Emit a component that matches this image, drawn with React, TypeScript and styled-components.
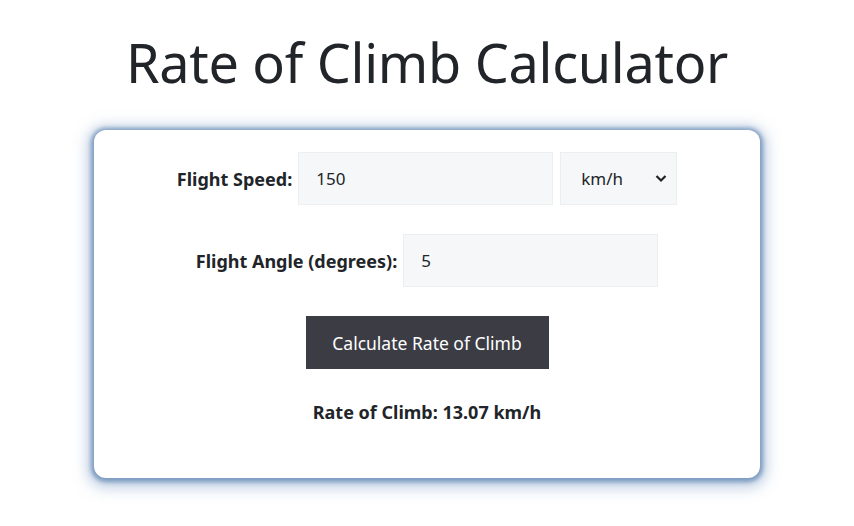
import React, { useState } from 'react';
import styled, { createGlobalStyle } from 'styled-components';

const GlobalStyle = createGlobalStyle`
  body {
    margin: 0;
    background: #ffffff;
    font-family: "Noto Sans", "Open Sans", sans-serif;
    color: #212529;
  }
`;

const Page = styled.div`
  display: flex;
  flex-direction: column;
  align-items: center;
  padding-top: 22px;
  min-height: 100vh;
  box-sizing: border-box;
`;

const Title = styled.h1`
  margin: 0 0 28px;
  font-size: 54px;
  font-weight: 400;
  line-height: 80px;
  letter-spacing: -0.3px;
`;

const Card = styled.div`
  width: 666px;
  box-sizing: border-box;
  background: #fff;
  border-radius: 12px;
  box-shadow: 0 1px 4px 3px rgba(110, 145, 185, 0.85), 0 3px 14px 7px rgba(135, 165, 203, 0.5);
  padding: 22px 0 54px;
  display: flex;
  flex-direction: column;
  align-items: center;
`;

const Row = styled.div`
  display: flex;
  align-items: center;
  justify-content: center;
  margin-bottom: 29px;
`;

const Label = styled.label`
  font-weight: 700;
  font-size: 18px;
  margin-right: 6px;
`;

const Field = styled.input`
  box-sizing: border-box;
  width: 255px;
  height: 53px;
  padding: 0 17px;
  font-family: inherit;
  font-size: 17px;
  color: #212529;
  background: #f6f7f9;
  border: 1px solid #eceef0;
  outline: none;
`;

const SelectWrap = styled.div`
  position: relative;
  margin-left: 7px;
`;

const Select = styled.select`
  box-sizing: border-box;
  appearance: none;
  width: 117px;
  height: 53px;
  padding: 0 20px;
  font-family: inherit;
  font-size: 17px;
  color: #212529;
  background: #f6f7f9;
  border: 1px solid #eceef0;
  outline: none;
`;

const Chevron = styled.svg`
  position: absolute;
  right: 9px;
  top: 21px;
  pointer-events: none;
`;

const Button = styled.button`
  width: 243px;
  height: 53px;
  border: none;
  background: #3c3c44;
  color: #fff;
  font-family: inherit;
  font-size: 17.5px;
  cursor: pointer;
  margin-bottom: 31px;
`;

const Result = styled.p`
  margin: 0;
  font-weight: 700;
  font-size: 18px;
`;

export default function App() {
  const [speed, setSpeed] = useState('150');
  const [angle, setAngle] = useState('5');
  const [unit, setUnit] = useState('km/h');
  const [rate, setRate] = useState('13.07');

  const calc = () => {
    const r = parseFloat(speed) * Math.sin((parseFloat(angle) * Math.PI) / 180);
    setRate(r.toFixed(2));
  };

  return (
    <Page>
      <GlobalStyle />
      <Title>Rate of Climb Calculator</Title>
      <Card>
        <Row>
          <Label>Flight Speed:</Label>
          <Field value={speed} onChange={(e) => setSpeed(e.target.value)} />
          <SelectWrap>
            <Select value={unit} onChange={(e) => setUnit(e.target.value)}>
              <option>km/h</option>
              <option>mph</option>
              <option>knots</option>
            </Select>
            <Chevron width="14" height="10" viewBox="0 0 14 10">
              <path d="M2.5 3 L7 7.5 L11.5 3" fill="none" stroke="#222" strokeWidth="2.2" />
            </Chevron>
          </SelectWrap>
        </Row>
        <Row>
          <Label>Flight Angle (degrees):</Label>
          <Field value={angle} onChange={(e) => setAngle(e.target.value)} />
        </Row>
        <Button onClick={calc}>Calculate Rate of Climb</Button>
        <Result>Rate of Climb: {rate} {unit}</Result>
      </Card>
    </Page>
  );
}
